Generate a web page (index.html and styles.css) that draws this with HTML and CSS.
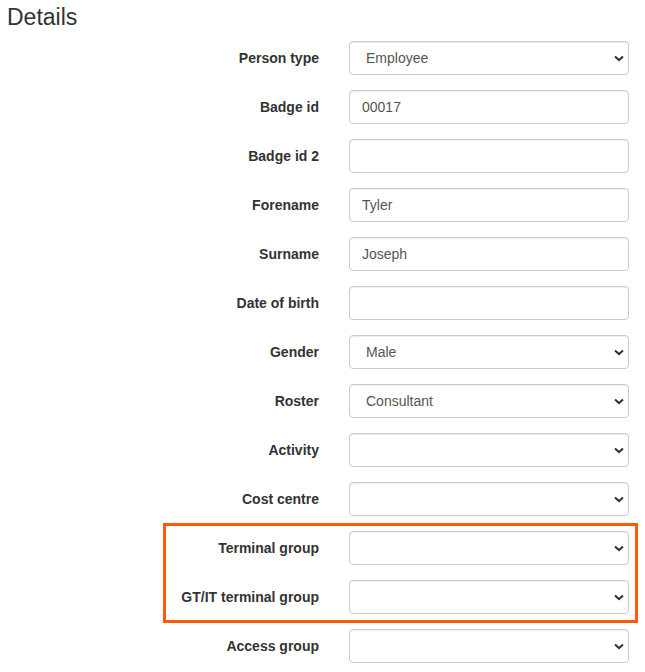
FILE: index.html
```html
<!DOCTYPE html>
<html>
<head>
  <title>Details</title>
  <link rel="stylesheet" href="styles.css">
</head>
<body>
<div class="wrapper">
  <h3>Details</h3>
  <form class="details-form">
    <div class="form-row">
      <label>Person type</label>
      <select class="form-control"><option>Employee</option></select>
    </div>
    <div class="form-row">
      <label>Badge id</label>
      <input class="form-control" type="text" value="00017">
    </div>
    <div class="form-row">
      <label>Badge id 2</label>
      <input class="form-control" type="text" value="">
    </div>
    <div class="form-row">
      <label>Forename</label>
      <input class="form-control" type="text" value="Tyler">
    </div>
    <div class="form-row">
      <label>Surname</label>
      <input class="form-control" type="text" value="Joseph">
    </div>
    <div class="form-row">
      <label>Date of birth</label>
      <input class="form-control" type="text" value="">
    </div>
    <div class="form-row">
      <label>Gender</label>
      <select class="form-control"><option>Male</option></select>
    </div>
    <div class="form-row">
      <label>Roster</label>
      <select class="form-control"><option>Consultant</option></select>
    </div>
    <div class="form-row">
      <label>Activity</label>
      <select class="form-control"><option></option></select>
    </div>
    <div class="form-row">
      <label>Cost centre</label>
      <select class="form-control"><option></option></select>
    </div>
    <!-- highlighted fields -->
    <div class="highlight">
      <div class="form-row">
        <label>Terminal group</label>
        <select class="form-control"><option></option></select>
      </div>
      <div class="form-row">
        <label>GT/IT terminal group</label>
        <select class="form-control"><option></option></select>
      </div>
    </div>
    <div class="form-row">
      <label>Access group</label>
      <select class="form-control"><option></option></select>
    </div>
  </form>
</div>
</body>
</html>
```

FILE: styles.css
```css
body {
  margin: 0;
  background: #fff;
  font-family: 'Liberation Sans', Arial, sans-serif;
  font-size: 14px;
  color: #333;
}
.wrapper {
  width: 629px;
  padding-top: 5px;
}
h3 {
  margin: 0 0 12px 7px;
  font-size: 23px;
  font-weight: normal;
  line-height: 24px;
  color: #333;
}
.form-row {
  display: grid;
  grid-template-columns: 1fr 280px;
  column-gap: 30px;
  align-items: center;
  margin-bottom: 15px;
}
.form-row label {
  text-align: right;
  font-weight: bold;
  color: #333;
}
.form-control {
  box-sizing: border-box;
  width: 280px;
  height: 34px;
  padding: 6px 12px;
  border: 1px solid #ccc;
  border-radius: 4px;
  background: #fff;
  font-family: inherit;
  font-size: 14px;
  color: #555;
  box-shadow: inset 0 1px 1px rgba(0,0,0,0.075);
  outline: 0;
}
select.form-control {
  appearance: none;
  -webkit-appearance: none;
  padding-left: 16px;
  background: #fff url("data:image/svg+xml,%3Csvg xmlns='http://www.w3.org/2000/svg' width='10' height='7' viewBox='0 0 10 7'%3E%3Cpath d='M1 1.5l4 3.6 4-3.6' fill='none' stroke='%23333' stroke-width='2'/%3E%3C/svg%3E") no-repeat right 4px center;
}
.highlight {
  position: relative;
}
.highlight::before {
  content: "";
  position: absolute;
  left: 163px;
  right: -9px;
  top: -8px;
  bottom: -9px;
  border: 3px solid #ff5a0a;
  pointer-events: none;
}
```
